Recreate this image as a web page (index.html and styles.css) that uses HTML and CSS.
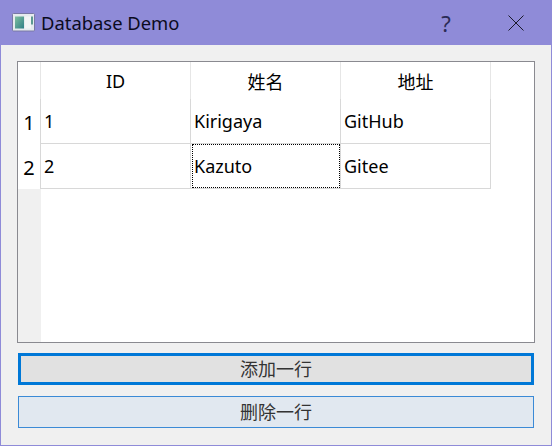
FILE: index.html
```html
<!DOCTYPE html>
<html lang="zh-CN">
<head>
    <meta charset="UTF-8">
    <meta name="viewport" content="width=device-width, initial-scale=1.0">
    <title>Database Demo</title>
    <link rel="stylesheet" href="styles.css">
</head>
<body>
    <div class="window">
        <div class="titlebar">
            <svg class="app-icon" width="24" height="20" viewBox="0 0 24 20">
                <defs>
                    <linearGradient id="pane" x1="0" y1="0" x2="1" y2="1">
                        <stop offset="0" stop-color="#7fbfa0"/>
                        <stop offset="1" stop-color="#2f7f86"/>
                    </linearGradient>
                </defs>
                <rect x="0.5" y="0.5" width="22" height="17.5" rx="1" fill="#e6ebee" stroke="#7878a4"/>
                <rect x="3" y="3.5" width="9" height="12" fill="url(#pane)"/>
                <rect x="13" y="3.5" width="6" height="12" fill="#f2f5f5"/>
                <rect x="19" y="3.5" width="2" height="8" fill="#5d9a92"/>
            </svg>
            <span class="title">Database Demo</span>
            <span class="help">?</span>
            <svg class="close" width="16" height="16" viewBox="0 0 16 16">
                <path d="M0.5 0.5L15.5 15.5M15.5 0.5L0.5 15.5" stroke="#1a1a2a" stroke-width="1" fill="none"/>
            </svg>
        </div>

        <div class="content">
            <div class="table">
                <div class="corner"></div>
                <div class="head">ID</div>
                <div class="head">姓名</div>
                <div class="head">地址</div>
                <div class="filler"></div>

                <div class="row-no">1</div>
                <div class="cell">1</div>
                <div class="cell">Kirigaya</div>
                <div class="cell">GitHub</div>
                <div class="filler"></div>

                <div class="row-no">2</div>
                <div class="cell">2</div>
                <div class="cell current">Kazuto</div>
                <div class="cell">Gitee</div>
                <div class="filler"></div>

                <div class="row-rest"></div>
            </div>

            <button class="btn btn-focus">添加一行</button>
            <button class="btn btn-hover">删除一行</button>
        </div>
    </div>
</body>
</html>
```

FILE: styles.css
```css
* {
    box-sizing: border-box;
}

body {
    margin: 0;
    font-family: "Noto Sans", "Noto Sans CJK SC", sans-serif;
    color: #000000;
}

.window {
    width: 552px;
    height: 446px;
    display: flex;
    flex-direction: column;
    border: 1px solid #8f8bd8;
    border-top: none;
    background-color: #f0f0f0;
}

.titlebar {
    height: 45px;
    flex-shrink: 0;
    display: flex;
    align-items: center;
    padding-left: 11px;
    background-color: #8f8bd8;
    color: #0b0b1e;
}

.app-icon {
    margin-right: 5px;
}

.title {
    font-size: 18.4px;
    flex: 1;
}

.help {
    font-size: 22px;
    width: 16px;
    text-align: center;
    margin-right: 54px;
    color: #2b2b55;
}

.close {
    margin-right: 27px;
}

.content {
    flex: 1;
    padding: 16px 17px 17px 16px;
    display: flex;
    flex-direction: column;
}

.table {
    width: 518px;
    height: 282px;
    display: grid;
    grid-template-columns: 22px 150px 150px 151px 1fr;
    grid-template-rows: 37px 45px 45px 1fr;
    border: 1px solid #8a8a90;
    background-color: #ffffff;
    font-size: 18px;
}

.head {
    display: flex;
    align-items: center;
    justify-content: center;
    border-left: 1px solid #e6e6e6;
}

.head:nth-child(4) {
    border-right: 1px solid #e6e6e6;
}

.row-no {
    display: flex;
    align-items: center;
    justify-content: center;
    font-size: 20px;
    padding-top: 1px;
}

.cell {
    display: flex;
    align-items: center;
    padding-left: 3px;
    border-left: 1px solid #d8d8d8;
    border-bottom: 1px solid #d8d8d8;
}

.cell:nth-child(9),
.cell:nth-child(14) {
    border-right: 1px solid #d8d8d8;
}

.current {
    position: relative;
}

.current::after {
    content: "";
    position: absolute;
    top: 0;
    right: 0;
    bottom: 0;
    left: 1px;
    border: 1px dotted #000000;
}

.row-rest {
    grid-column: 1;
    width: 23px;
    background-color: #f0f0f0;
}

.btn {
    height: 32px;
    width: 516px;
    margin-left: 1px;
    font-family: "Noto Sans CJK SC", sans-serif;
    font-size: 18px;
    line-height: 20px;
    color: #333333;
    padding: 0 0 2px 0;
}

.btn-focus {
    margin-top: 10px;
    border: 3px solid #0078d7;
    background-color: #e1e1e1;
}

.btn-hover {
    margin-top: 11px;
    border: 1px solid #3b8ad6;
    background-color: #e1e8f0;
}
```
